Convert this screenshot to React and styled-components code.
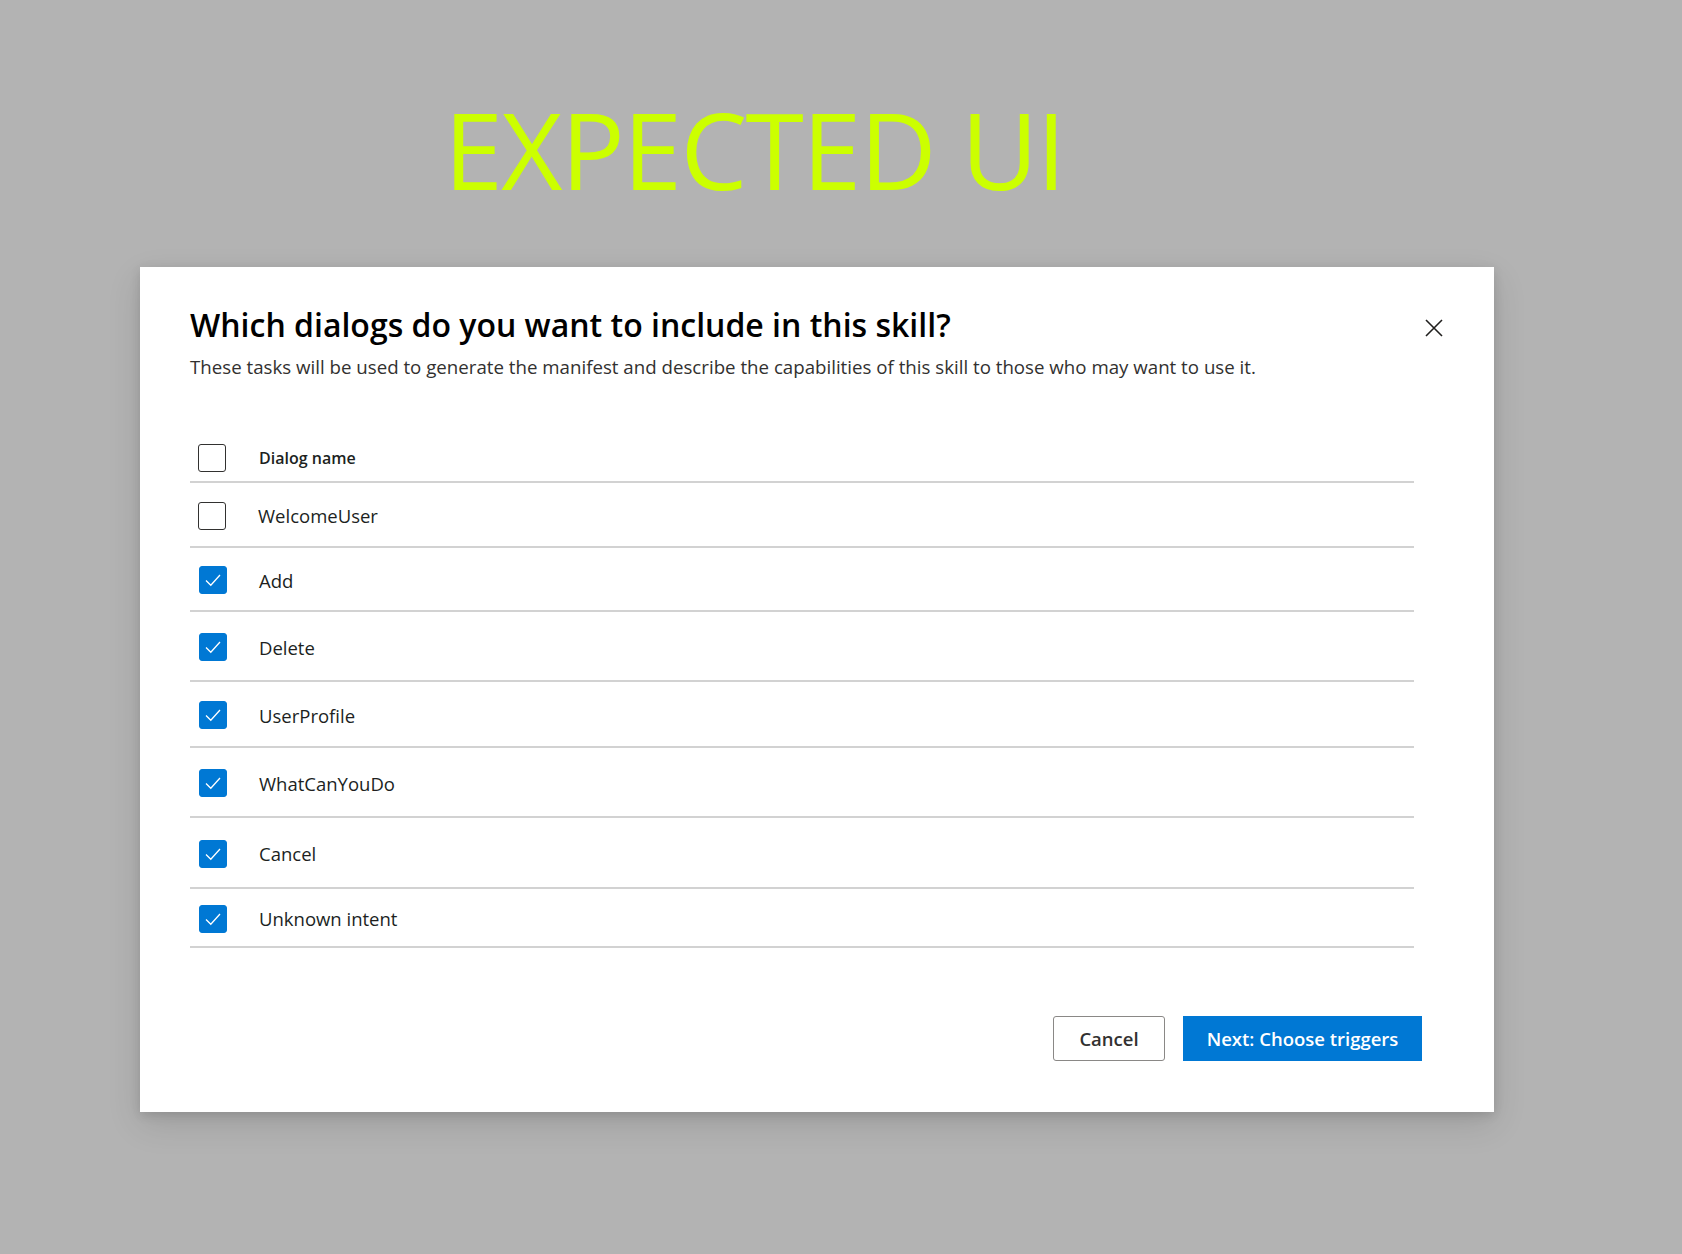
import React from "react";
import styled, { createGlobalStyle } from "styled-components";

const GlobalStyle = createGlobalStyle`
  html, body {
    margin: 0;
    padding: 0;
    background: #b3b3b3;
  }
  body {
    font-family: "Open Sans", "Noto Sans", sans-serif;
    color: #000;
  }
`;

const dialogs = [
  { name: "WelcomeUser", checked: false, height: 65 },
  { name: "Add", checked: true, height: 64 },
  { name: "Delete", checked: true, height: 70 },
  { name: "UserProfile", checked: true, height: 66 },
  { name: "WhatCanYouDo", checked: true, height: 70 },
  { name: "Cancel", checked: true, height: 71 },
  { name: "Unknown intent", checked: true, height: 59 },
];

export default function App() {
  return (
    <>
      <GlobalStyle />
      <Page>
        <Banner>EXPECTED UI</Banner>
        <Dialog>
          <CloseButton aria-label="Close">
            <svg width="18" height="18" viewBox="0 0 18 18">
              <path d="M1 1 L17 17 M17 1 L1 17" stroke="#201f1e" strokeWidth="1.6" fill="none" />
            </svg>
          </CloseButton>
          <Title>Which dialogs do you want to include in this skill?</Title>
          <Subtitle>
            These tasks will be used to generate the manifest and describe the
            capabilities of this skill to those who may want to use it.
          </Subtitle>

          <Table>
            <HeaderRow>
              <Checkbox checked={false} />
              <HeaderCell>Dialog name</HeaderCell>
            </HeaderRow>
            {dialogs.map((d) => (
              <Row key={d.name} $h={d.height}>
                <Checkbox checked={d.checked} />
                <Cell>{d.name}</Cell>
              </Row>
            ))}
          </Table>

          <Footer>
            <DefaultButton>Cancel</DefaultButton>
            <PrimaryButton>Next: Choose triggers</PrimaryButton>
          </Footer>
        </Dialog>
      </Page>
    </>
  );
}

function Checkbox({ checked }) {
  return (
    <Box $checked={checked}>
      {checked && (
        <svg width="22" height="22" viewBox="0 0 22 22">
          <polyline points="4,11.5 8.8,16.3 18,6" stroke="#fff" strokeWidth="1.3" fill="none" />
        </svg>
      )}
    </Box>
  );
}

const Page = styled.div`
  width: 1682px;
  min-height: 1254px;
  padding-top: 77px;
  box-sizing: border-box;
`;

const Banner = styled.div`
  margin-left: 444px;
  font-size: 106px;
  line-height: 144px;
  color: #ccff00;
  font-weight: 400;
  letter-spacing: -1.6px;
`;

const Dialog = styled.div`
  position: relative;
  margin: 46px 0 0 140px;
  width: 1354px;
  height: 845px;
  box-sizing: border-box;
  background: #fff;
  padding: 36px 80px 0 50px;
  box-shadow: 0 12px 32px rgba(0, 0, 0, 0.12), 0 3px 10px rgba(0, 0, 0, 0.12);
`;

const CloseButton = styled.button`
  position: absolute;
  top: 52px;
  right: 51px;
  width: 18px;
  height: 18px;
  padding: 0;
  border: none;
  background: transparent;
  display: flex;
  cursor: pointer;
`;

const Title = styled.h1`
  margin: 0;
  font-size: 32px;
  line-height: 44px;
  font-weight: 600;
  color: #000;
`;

const Subtitle = styled.p`
  margin: 7px 0 0;
  font-size: 18.7px;
  line-height: 26px;
  color: #323130;
  white-space: nowrap;
`;

const Table = styled.div`
  margin-top: 40px;
  display: flex;
  flex-direction: column;
`;

const HeaderRow = styled.div`
  display: flex;
  align-items: center;
  height: 63px;
  padding-top: 14px;
  border-bottom: 2px solid #d2d2d2;
  box-sizing: border-box;
`;

const Row = styled.div`
  display: flex;
  align-items: center;
  height: ${(p) => p.$h}px;
  border-bottom: 2px solid #d2d2d2;
  box-sizing: border-box;
  padding-top: 2px;
`;

const Box = styled.span`
  width: 28px;
  height: 28px;
  margin-left: ${(p) => (p.$checked ? 9 : 8)}px;
  box-sizing: border-box;
  border-radius: 3px;
  border: 1.5px solid ${(p) => (p.$checked ? "#0078d4" : "#323130")};
  background: ${(p) => (p.$checked ? "#0078d4" : "#fff")};
  display: flex;
  align-items: center;
  justify-content: center;
  flex-shrink: 0;
`;

const HeaderCell = styled.span`
  margin-left: 33px;
  font-size: 16px;
  font-weight: 600;
  color: #201f1e;
`;

const Cell = styled.span`
  margin-left: 32px;
  font-size: 18.5px;
  color: #201f1e;
`;

const Footer = styled.div`
  display: flex;
  justify-content: flex-end;
  gap: 18px;
  margin-top: 68px;
  margin-right: -8px;
`;

const BaseButton = styled.button`
  height: 45px;
  box-sizing: border-box;
  font-family: "Open Sans", "Noto Sans", sans-serif;
  font-size: 18.5px;
  font-weight: 600;
  padding: 0 20px;
  cursor: pointer;
`;

const DefaultButton = styled(BaseButton)`
  width: 112px;
  background: #fff;
  color: #323130;
  border: 1.5px solid #8a8886;
  border-radius: 3px;
`;

const PrimaryButton = styled(BaseButton)`
  width: 239px;
  background: #0078d4;
  color: #fff;
  border: none;
  border-radius: 0;
`;
